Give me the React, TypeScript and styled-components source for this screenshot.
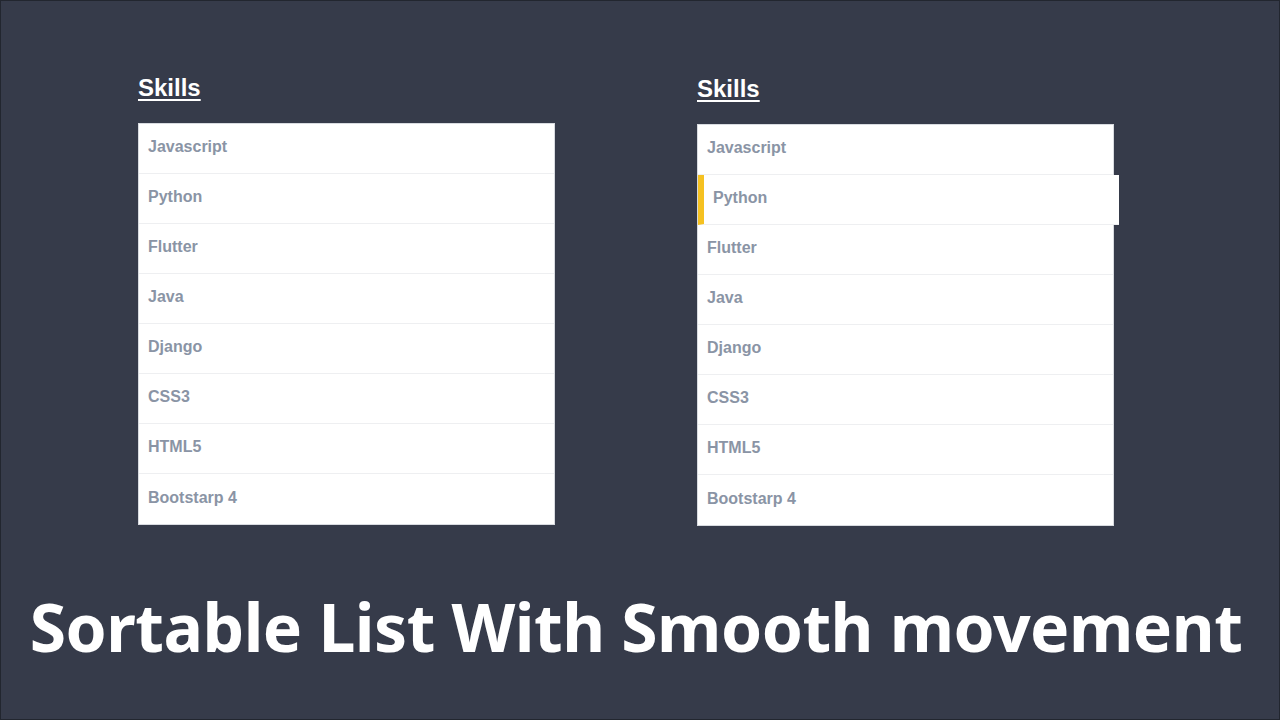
import React, { ReactElement } from 'react'
import styled, { createGlobalStyle } from 'styled-components'

const GlobalStyle = createGlobalStyle`
  html, body {
    margin: 0;
    padding: 0;
    background: #363b4a;
  }
`

const Page = styled.div`
  box-sizing: border-box;
  width: 1280px;
  height: 720px;
  border: 1px solid #22262f;
  background: #363b4a;
  display: flex;
  flex-direction: column;
  overflow: hidden;
`

const Columns = styled.div`
  display: flex;
  gap: 142px;
  padding: 69px 0 0 137px;
`

const Column = styled.div<{ $offset?: number }>`
  display: flex;
  flex-direction: column;
  width: 417px;
  margin-top: ${p => p.$offset ?? 0}px;
`

const Heading = styled.h2`
  margin: 0 0 17px;
  font-family: 'Liberation Sans', Arial, sans-serif;
  font-size: 24px;
  font-weight: 700;
  line-height: 36px;
  color: #ffffff;
  text-decoration: underline;
  text-underline-offset: 3px;
  text-decoration-thickness: 2px;
`

const List = styled.ul`
  list-style: none;
  margin: 0;
  padding: 0;
  background: #ffffff;
  border: 1px solid #d8dbe0;
`

const Item = styled.li<{ $active?: boolean }>`
  box-sizing: border-box;
  height: 50px;
  display: flex;
  align-items: center;
  padding: 0 0 3px 9px;
  background: #ffffff;
  border-bottom: 1px solid #eeeff1;
  font-family: 'Liberation Sans', Arial, sans-serif;
  font-size: 16px;
  font-weight: 700;
  color: #8a94a5;

  &:last-child {
    border-bottom: none;
  }

  ${p =>
    p.$active &&
    `
    width: calc(100% + 6px);
    border-left: 6px solid #f5c121;
    box-shadow: 0 1px 2px rgba(0, 0, 0, 0.04);
  `}
`

const Caption = styled.h1`
  margin: 60px 0 0;
  padding-right: 8px;
  text-align: center;
  font-family: 'Noto Sans', 'Open Sans', sans-serif;
  font-size: 66px;
  font-weight: 700;
  line-height: 80px;
  color: #ffffff;
  letter-spacing: -0.5px;
`

const skills = ['Javascript', 'Python', 'Flutter', 'Java', 'Django', 'CSS3', 'HTML5', 'Bootstarp 4']

function SkillList({ active, offset }: { active?: string; offset?: number }): ReactElement {
  return (
    <Column $offset={offset}>
      <Heading>Skills</Heading>
      <List>
        {skills.map(skill => (
          <Item key={skill} $active={skill === active}>
            {skill}
          </Item>
        ))}
      </List>
    </Column>
  )
}

export default function App(): ReactElement {
  return (
    <Page>
      <GlobalStyle />
      <Columns>
        <SkillList />
        <SkillList active="Python" offset={1} />
      </Columns>
      <Caption>Sortable List With Smooth movement</Caption>
    </Page>
  )
}
